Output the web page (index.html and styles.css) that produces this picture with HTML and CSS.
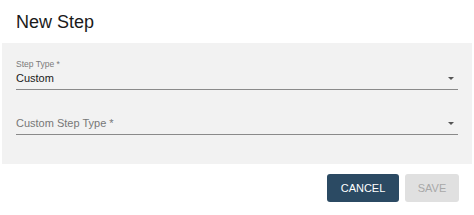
FILE: index.html
```html
<!DOCTYPE html>
<html>
<head>
<meta charset="utf-8">
<link rel="stylesheet" href="styles.css">
</head>
<body>
<div class="dialog">
  <h2 class="title">New Step</h2>
  <div class="content">
    <div class="field">
      <div class="label">Step Type *</div>
      <div class="input">
        <span class="value">Custom</span>
        <span class="caret"></span>
      </div>
    </div>
    <div class="field field-empty">
      <div class="input">
        <span class="placeholder">Custom Step Type *</span>
        <span class="caret"></span>
      </div>
    </div>
  </div>
  <div class="actions">
    <button class="btn btn-primary">CANCEL</button>
    <button class="btn btn-disabled" disabled>SAVE</button>
  </div>
</div>
</body>
</html>
```
FILE: styles.css
```css
html, body {
  margin: 0;
  padding: 0;
  background: #ffffff;
}
body {
  font-family: "Liberation Sans", Arial, sans-serif;
  width: 474px;
  height: 215px;
  overflow: hidden;
}
.dialog {
  display: flex;
  flex-direction: column;
}
.title {
  margin: 0;
  height: 43px;
  padding: 10px 16px 0;
  box-sizing: border-box;
  font-size: 18px;
  font-weight: 400;
  line-height: 24px;
  color: #1a1a1a;
}
.content {
  margin: 0 2px;
  background: #f2f2f2;
  padding: 16px 14px 0;
  height: 121px;
  box-sizing: border-box;
}
.field {
  display: flex;
  flex-direction: column;
}
.label {
  font-size: 8.5px;
  line-height: 10px;
  color: #7a7a7a;
}
.input {
  display: flex;
  align-items: center;
  justify-content: space-between;
  border-bottom: 1px solid #8a8a8a;
  padding-bottom: 4px;
  height: 14px;
  margin-top: 2px;
}
.value {
  font-size: 11px;
  line-height: 14px;
  color: #1a1a1a;
}
.placeholder {
  font-size: 11px;
  line-height: 14px;
  color: #777777;
}
.caret {
  width: 0;
  height: 0;
  border-left: 3.5px solid transparent;
  border-right: 3.5px solid transparent;
  border-top: 3.5px solid #555555;
  margin-right: 4px;
}
.field-empty {
  margin-top: 24px;
}
.actions {
  display: flex;
  justify-content: flex-end;
  gap: 6px;
  padding: 10px 15px 0;
}
.btn {
  font-family: "Liberation Sans", Arial, sans-serif;
  font-size: 11px;
  border: none;
  border-radius: 3px;
  height: 28px;
  padding: 0;
}
.btn-primary {
  width: 72px;
  background: #2b4a63;
  color: #ffffff;
}
.btn-disabled {
  width: 54px;
  background: #e0e0e0;
  color: #a8a8a8;
}
```
